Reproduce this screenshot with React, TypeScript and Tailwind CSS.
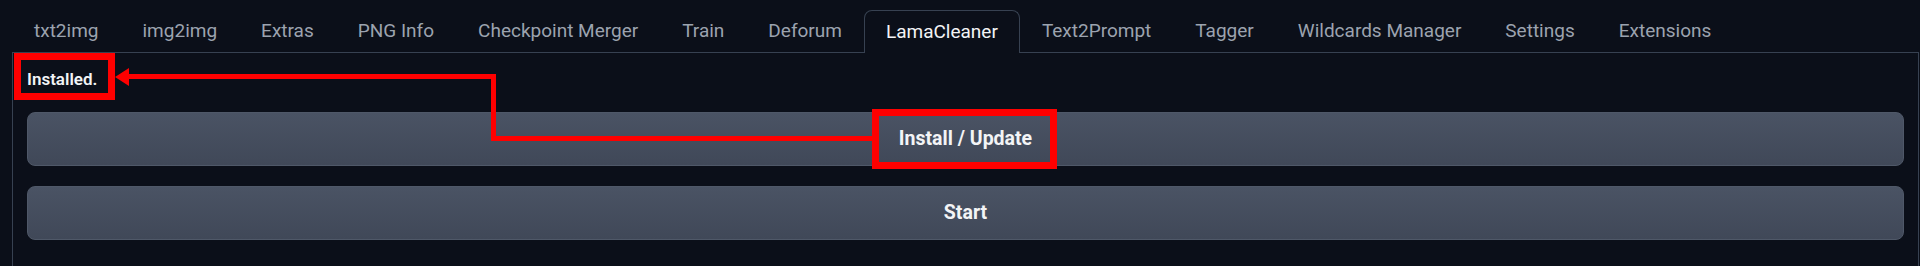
import React from "react";

// ─── Tabs ───────────────────────────────────────────────────────

const TABS = [
  "txt2img",
  "img2img",
  "Extras",
  "PNG Info",
  "Checkpoint Merger",
  "Train",
  "Deforum",
  "LamaCleaner",
  "Text2Prompt",
  "Tagger",
  "Wildcards Manager",
  "Settings",
  "Extensions",
];

const ACTIVE = "LamaCleaner";

function TabBar() {
  return (
    <div className="flex pt-[10px] border-b border-[#374151]">
      {TABS.map((tab) => {
        const isActive = tab === ACTIVE;
        return (
          <button
            key={tab}
            className={
              isActive
                ? "h-[43px] -mb-px px-[21px] flex items-center border border-b-0 border-[#374151] rounded-t-lg bg-[#0b0f19] text-[19px] text-[#f3f4f6]"
                : "h-[42px] px-[21px] flex items-center border border-transparent text-[19px] text-[#9ca3af]"
            }
          >
            {tab}
          </button>
        );
      })}
    </div>
  );
}

// ─── Buttons ────────────────────────────────────────────────────

function PanelButton({ label }: { label: string }) {
  return (
    <button className="w-full h-[54px] rounded-lg border border-[#4f5868] bg-linear-to-b from-[#4a5364] to-[#404858] text-[19.5px] font-bold text-[#f3f4f6]">
      {label}
    </button>
  );
}

// ─── Red annotations (overlay) ──────────────────────────────────

function Annotations() {
  return (
    <svg
      className="absolute inset-0 pointer-events-none"
      width={1920}
      height={266}
      viewBox="0 0 1920 266"
    >
      <rect x={17.5} y={56.5} width={94} height={40} fill="none" stroke="#ff0000" strokeWidth={7} />
      <rect x={875.5} y={112.5} width={178} height={53} fill="none" stroke="#ff0000" strokeWidth={7} />
      <polyline
        points="872,138.5 493.5,138.5 493.5,76.5 127,76.5"
        fill="none"
        stroke="#ff0000"
        strokeWidth={5}
        strokeLinejoin="miter"
      />
      <polygon points="115,77 129,68 129,86" fill="#ff0000" />
    </svg>
  );
}

// ─── App ────────────────────────────────────────────────────────

export default function App() {
  return (
    <div
      className="relative w-[1920px] h-[266px] overflow-hidden bg-[#0b0f19] pl-3 pr-px"
      style={{ fontFamily: "Roboto, 'Liberation Sans', sans-serif" }}
    >
      <TabBar />

      <div className="h-[300px] border-x border-[#374151] px-[14px] pt-[14px]">
        <div className="h-6 leading-6 text-[17px] font-semibold text-[#f3f4f6]">
          Installed.
        </div>
        <div className="mt-[21px] flex flex-col gap-5">
          <PanelButton label="Install / Update" />
          <PanelButton label="Start" />
        </div>
      </div>

      <Annotations />
    </div>
  );
}
